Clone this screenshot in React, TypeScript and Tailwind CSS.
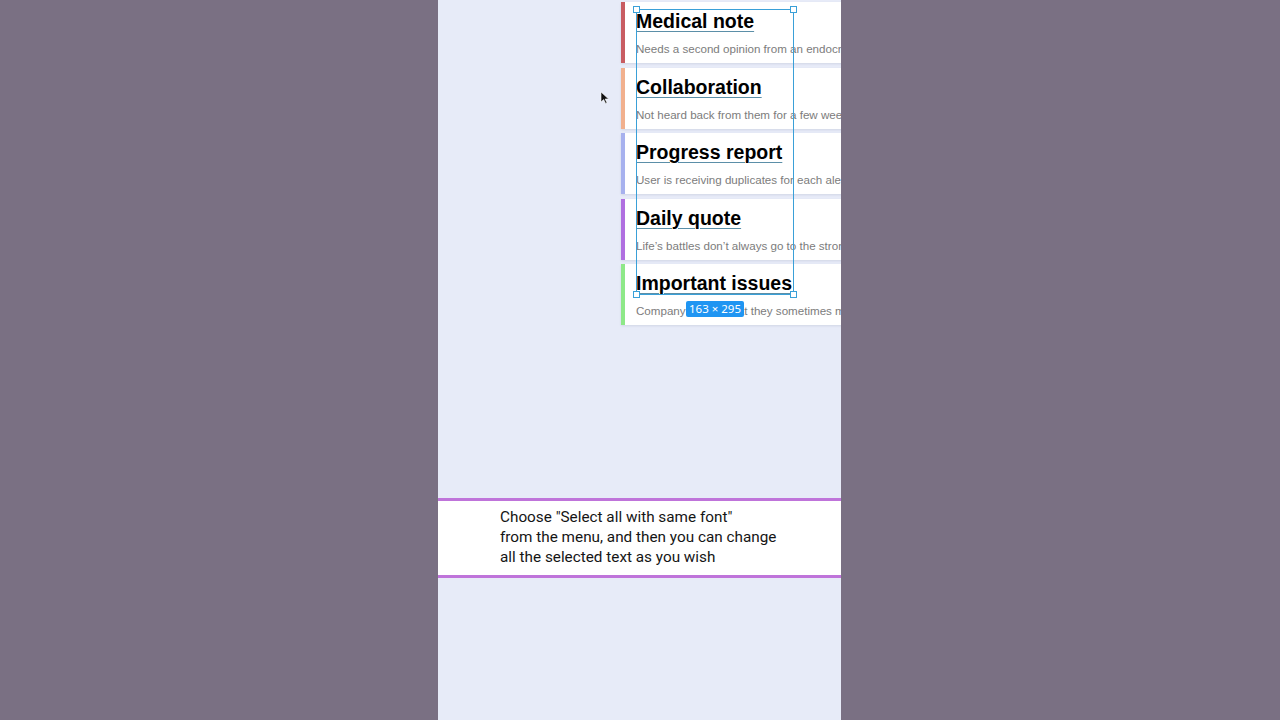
import React from "react"

const notes = [
  { title: "Medical note", body: "Needs a second opinion from an endocrinologist", bar: "border-[#c85c62]" },
  { title: "Collaboration", body: "Not heard back from them for a few weeks now", bar: "border-[#f1b08e]" },
  { title: "Progress report", body: "User is receiving duplicates for each alert sent", bar: "border-[#a7b1ee]" },
  { title: "Daily quote", body: "Life’s battles don’t always go to the strongest", bar: "border-[#b06fe0]" },
  { title: "Important issues", body: "Company reports that they sometimes miss", bar: "border-[#8ee888]" },
]

function Handle({ className }: { className: string }) {
  return <span className={`absolute w-[7px] h-[7px] bg-white border border-[#3aa0d8] ${className}`} />
}

export default function App() {
  return (
    <div className="h-[720px] w-full flex pl-[438px] bg-[#7a7083] overflow-hidden">
      <div className="relative w-[403px] h-full flex flex-col bg-[#e7ebf8] overflow-hidden">
        {/* Note cards */}
        <div className="h-[498px] pl-[183px] pt-[2px]">
          <div className="relative flex flex-col gap-[4.5px] w-[320px]">
            {notes.map((n) => (
              <div
                key={n.title}
                className={`h-[61px] bg-white border-l-4 ${n.bar} pl-[11px] pt-[7px] shadow-[0_1px_2px_rgba(60,70,110,0.12)]`}
              >
                <p
                  className="text-[19.5px] leading-[24px] font-bold text-black underline decoration-[#5b8fa8] decoration-1 underline-offset-[3px]"
                  style={{ fontFamily: '"Liberation Sans", Arial, sans-serif' }}
                >
                  {n.title}
                </p>
                <p
                  className="mt-[9px] text-[11.6px] leading-[13px] text-[#7c7c7c] whitespace-nowrap"
                  style={{ fontFamily: '"Liberation Sans", Arial, sans-serif' }}
                >
                  {n.body}
                </p>
              </div>
            ))}

            {/* Selection box */}
            <div className="absolute left-[15px] top-[7px] w-[158px] h-[286px] border border-[#3aa0d8] pointer-events-none">
              <Handle className="-left-[4px] -top-[4px]" />
              <Handle className="-right-[4px] -top-[4px]" />
              <Handle className="-left-[4px] -bottom-[4px]" />
              <Handle className="-right-[4px] -bottom-[4px]" />
              <span
                className="absolute left-[49px] top-[291px] h-[16px] px-[3px] rounded-[2px] bg-[#1f95f2] text-white text-[11.5px] leading-[16px] whitespace-nowrap"
                style={{ fontFamily: '"Noto Sans", Roboto, sans-serif' }}
              >
                163 × 295
              </span>
            </div>
          </div>
        </div>

        {/* Caption */}
        <div className="h-[80px] bg-white border-y-[3.5px] border-[#bf74da] pl-[62px] pt-[6px]">
          <p
            className="text-[15.3px] leading-[20px] text-[#151515]"
            style={{ fontFamily: "Roboto, 'Noto Sans', sans-serif" }}
          >
            Choose "Select all with same font"
            <br />
            from the menu, and then you can change
            <br />
            all the selected text as you wish
          </p>
        </div>

        {/* Mouse cursor */}
        <svg className="absolute left-[162px] top-[91px]" width="10" height="13" viewBox="0 0 10 13">
          <path d="M1 1 L1 11 L3.6 8.6 L5.6 12.4 L7 11.7 L5.1 8 L8.6 8 Z" fill="#111" stroke="#fff" strokeWidth="0.6" />
        </svg>
      </div>
    </div>
  )
}
